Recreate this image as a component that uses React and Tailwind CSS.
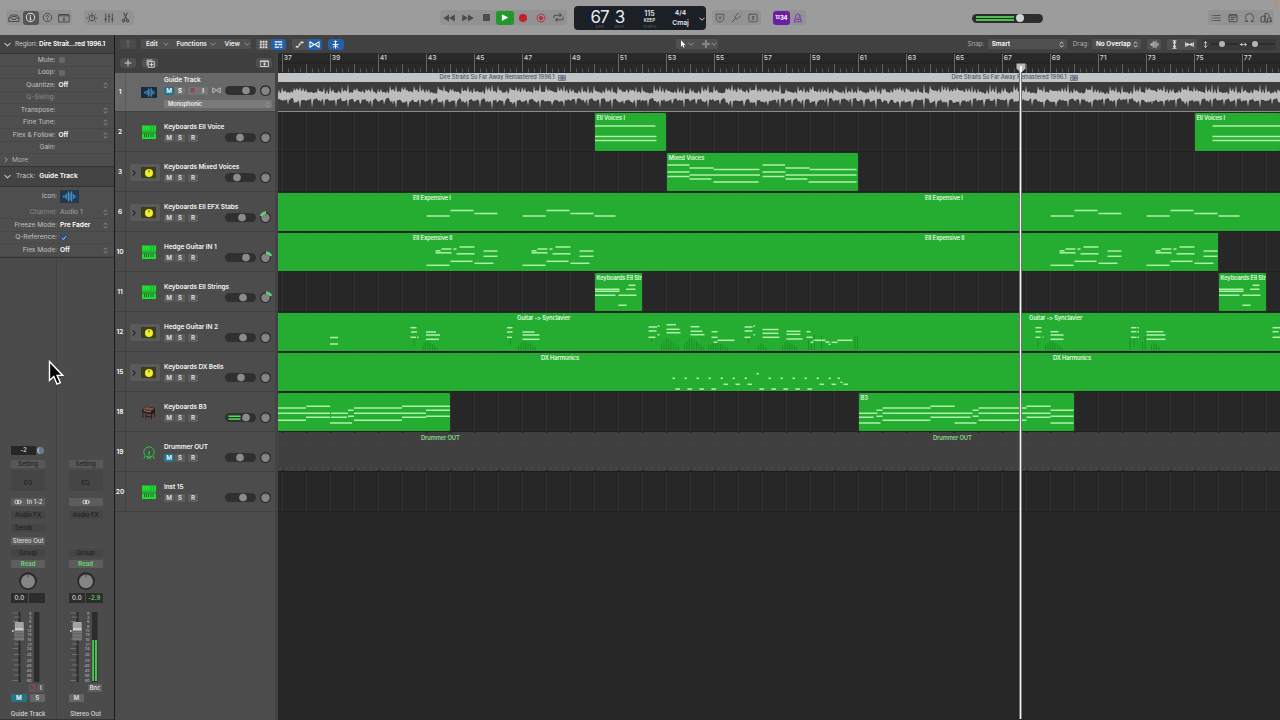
import React from 'react';
import clsx from 'clsx';

const LEFT = 278;
const RIGHT = 1280;
const BAR = 24;
const FIRST_BAR_X = 282.5;

// notes are [x1, y, x2], y is measured from the top of the lane
const shift = (notes, dx) => notes.map(([a, y, b]) => [a + dx, y, b + dx]);

const voices = [[594, 14, 655], [594, 24.5, 656], [594, 28.5, 656]];
const voicesLate = [[1212, 14, 1280], [1212, 24.5, 1280], [1212, 28.5, 1280]];

const mixed = [
  [667, 13, 689], [689, 16, 713], [713, 17.5, 759], [667, 20, 689], [689, 23, 759.5], [667, 24.5, 689], [689, 27, 711], [713, 30, 758],
  [762, 13, 784.5], [785, 16, 809], [809, 17.5, 856], [762, 20, 785], [785, 23, 856], [762, 24.5, 784], [785, 27, 807], [808, 30, 856],
];

const stabs = [
  [426, 24, 449], [450, 18.5, 473], [474, 21.5, 497], [522, 24, 545], [546, 18.5, 569], [570, 21.5, 593], [594, 24, 615],
];

const expensivePhrase = [
  [441, 17, 451], [453, 17, 456], [459, 15, 474], [435, 18.8, 440], [435, 20.8, 451], [456, 21.8, 474], [483, 19, 497],
  [483, 24.3, 497], [450, 29.3, 472], [474, 31.3, 493], [426, 33.3, 449],
];
const expensive = [...expensivePhrase, ...shift(expensivePhrase, 96)];

const strings = [
  [628, 13.3, 635], [594, 17.3, 619], [625.5, 17.3, 635], [594, 19.2, 619], [594, 23.3, 615], [618, 23.3, 636], [618, 33.3, 626],
];

const guitar = [
  [330, 25.5, 338], [330, 32, 338],
  [410.5, 15.7, 416.5], [411, 20, 417], [410.5, 25.3, 416], [417, 25.3, 418.5], [426, 20, 436], [426, 23, 440], [426, 27.3, 439],
  [507, 15.7, 512.5], [507, 20, 512.5], [507, 25.3, 512], [522, 20, 534], [522, 23, 539], [522, 27.3, 539],
  [648, 15, 656.5], [657, 14, 659], [648, 19, 656], [657, 22.7, 659], [648, 25.3, 655],
  [666, 12.7, 675.5], [666, 17.3, 679], [666, 20.7, 680], [690, 14.7, 699], [690, 19.3, 702], [690, 22.7, 704],
  [711, 19.7, 717], [711, 25.3, 717], [713, 30.3, 717], [717, 28.3, 734],
  [744, 15, 752], [753, 14, 754.5], [744, 19, 752], [753, 22.7, 754.5], [744, 25.3, 750],
  [762, 17.5, 778], [762, 21.3, 778], [762, 25.3, 779], [786, 19.3, 800], [786, 22.3, 800], [786, 27, 802],
  [806, 19.7, 810], [806, 25.3, 812], [810, 30.3, 813], [813, 28.3, 825], [825, 30, 829], [828, 32.3, 830], [831, 30.3, 837], [837, 28.3, 852],
];
const guitarLoop = [
  [1035, 15.7, 1041], [1035, 19.7, 1041], [1035, 25.3, 1040], [1042, 25.3, 1043], [1050, 19.7, 1058], [1050, 23, 1063], [1050, 27.3, 1063],
  [1130.5, 15.7, 1136], [1137, 15.7, 1138.5], [1130.5, 19.7, 1136], [1137, 19.7, 1138.5], [1130.5, 25.3, 1136], [1137, 25.3, 1138.5], [1146, 19.7, 1163], [1146, 23, 1165], [1146, 27.3, 1165],
  [1272, 15.7, 1280], [1272, 19.7, 1278], [1272, 25.3, 1280],
];

// controller data drawn as dark bars: [x, top, bottom]
const hump = (from, to, height) => {
  const bars = [];
  for (let x = from; x <= to; x += 2.4) {
    const t = (x - from) / (to - from);
    bars.push([x, 38 - height * (t < 0.3 ? 0.5 + t * 1.6 : 1.3 - t * 1.1), 38.5]);
  }
  return bars;
};
const guitarBars = [
  [414, 27, 34], [510.5, 27, 33], ...hump(423, 438, 10), ...hump(518, 537, 10),
  [651, 27, 30], [748, 27, 31], ...hump(661, 679, 13), ...hump(684, 704, 13), ...hump(708, 729, 9), ...hump(758, 767, 7), ...hump(782, 798, 10),
  [808, 28, 38], [811, 32, 38], [814, 23, 38], [821, 24, 38], [854.5, 24, 38], [857, 24, 38],
  [1037.5, 27, 35], ...hump(1045, 1062, 10), [1129.5, 26, 38], [1133.5, 27, 35], [1142, 30, 38], [1144.5, 24, 38], ...hump(1151, 1160, 9),
];

const bells = [
  ...[672, 684, 696, 708, 720, 732, 744, 768, 780, 792, 804, 816, 828, 837].map((x) => [x, 26.3, x + 2.5]),
  [756, 21.7, 758.5],
  ...[675, 687, 699, 711, 759, 771, 783, 795, 807].map((x) => [x, 37, x + 4.5]),
  ...[723, 735, 747, 819, 831, 843].map((x) => [x, 32.3, x + 4.5]),
  [840, 30.3, 842],
];

const organA = [
  [306.5, 14.3, 330], [402, 14.3, 450], [278, 16, 306], [354, 16, 402], [348, 18.3, 353.5], [426, 18.3, 450], [278, 21.3, 330],
  [331, 21.3, 348], [354, 21.3, 426], [348, 24.3, 354], [426, 24.3, 450], [306, 25.3, 330], [331, 25.3, 347], [402, 25.3, 426],
  [278, 28.3, 306], [354, 28.3, 402], [330, 31, 352],
];
const organB = [
  [930, 14.3, 954], [1026, 14.3, 1050], [882, 16, 930], [978, 16, 1026], [876, 18.3, 882], [972, 18.3, 978], [1050, 18.3, 1073],
  [858, 21.3, 877], [882, 21.3, 972], [978, 21.3, 1050], [876, 24.3, 882], [972, 24.3, 978], [1050, 24.3, 1073], [858, 25.3, 873],
  [930, 25.3, 970], [1026, 25.3, 1050], [882, 28.3, 930], [978, 28.3, 1026], [858, 31, 880], [954, 31, 976], [1050, 31, 1073],
];

const tracks = [
  { num: 2, name: 'Keyboards EII Voice', icon: 'synth', vol: 15, regions: [
    { from: 594.5, to: 666, title: 'EII Voices I', notes: voices },
    { from: 1194.5, to: 1280, title: 'EII Voices I', notes: voicesLate },
  ] },
  { num: 3, name: 'Keyboards Mixed Voices', icon: 'stack', vol: 12, regions: [
    { from: 666.5, to: 858, title: 'Mixed Voices', notes: mixed },
  ] },
  { num: 6, name: 'Keyboards EII EFX Stabs', icon: 'stack', vol: 17, pan: 'left', loop: true, regions: [
    { from: 278, to: 410.5, notes: [] },
    { from: 410.5, to: 922.5, title: 'EII Expensive I', notes: stabs },
    { from: 922.5, to: 1280, title: 'EII Expensive I', notes: shift(stabs, 624) },
  ] },
  { num: 10, name: 'Hedge Guitar IN 1', icon: 'synth', vol: 21, pan: 'right', loop: true, regions: [
    { from: 278, to: 410.5, notes: [] },
    { from: 410.5, to: 922.5, title: 'EII Expensive II', notes: expensive },
    { from: 922.5, to: 1218, title: 'EII Expensive II', notes: shift(expensive, 624) },
  ] },
  { num: 11, name: 'Keyboards EII Strings', icon: 'synth', vol: 18, pan: 'right', regions: [
    { from: 594.5, to: 642, title: 'Keyboards EII Str', notes: strings },
    { from: 1218.5, to: 1266, title: 'Keyboards EII Str', notes: shift(strings, 624) },
  ] },
  { num: 12, name: 'Hedge Guitar IN 2', icon: 'stack', vol: 18, loop: true, regions: [
    { from: 278, to: 514.5, notes: guitar, bars: guitarBars },
    { from: 514.5, to: 1026.5, title: 'Guitar -> Synclavier', notes: guitar, bars: guitarBars },
    { from: 1026.5, to: 1280, title: 'Guitar -> Synclavier', notes: guitarLoop, bars: guitarBars },
  ] },
  { num: 15, name: 'Keyboards DX Bells', icon: 'stack', vol: 16, loop: true, regions: [
    { from: 278, to: 538.5, notes: [] },
    { from: 538.5, to: 1050.5, title: 'DX Harmonics', notes: bells },
    { from: 1050.5, to: 1280, title: 'DX Harmonics', notes: [] },
  ] },
  { num: 18, name: 'Keyboards B3', icon: 'organ', vol: 21, level: true, regions: [
    { from: 278, to: 450, notes: organA },
    { from: 858.5, to: 1074, title: 'B3', notes: organB },
  ] },
  { num: 19, name: 'Drummer OUT', icon: 'drums', vol: 15, muted: true, drummer: true, regions: [
    { from: 278, to: 418.5 },
    { from: 418.5, to: 930.5, title: 'Drummer OUT' },
    { from: 930.5, to: 1280, title: 'Drummer OUT' },
  ] },
  { num: 20, name: 'Inst 15', icon: 'synth', vol: 18, regions: [] },
];

const barLines = Array.from({ length: 42 }, (_, i) => FIRST_BAR_X - LEFT + i * BAR);

const wavePath = (() => {
  let seed = 11;
  const rand = () => {
    seed = (seed * 16807) % 2147483647;
    return seed / 2147483647;
  };
  const top = [];
  const bottom = [];
  let level = 3;
  for (let x = 0; x <= 1002; x += 1) {
    if (x % 12 === 4) level = 3.5 + rand() * 2.5;
    level = Math.max(1.8, level - 0.22);
    let up = level + rand() * 2;
    let down = level + rand() * 2;
    if (x % 6 === 1) up += rand() * 4;
    if (x % 8 === 3) down += rand() * 3;
    if (x % 12 === 4) up = 7 + rand() * 5;
    if (x % 24 === 22) {
      up = 9 + rand() * 4;
      down = 11 + rand() * 2.5;
    }
    if (x % 24 === 10) down = 8 + rand() * 5;
    top.push(`${x},${(14 - up).toFixed(1)}`);
    bottom.unshift(`${x},${(14 + down).toFixed(1)}`);
  }
  return `M${top.join('L')}L${bottom.join('L')}Z`;
})();

function Svg({ size = 12, className, children, ...rest }) {
  return (
    <svg width={size} height={size} viewBox="0 0 12 12" fill="none" stroke="currentColor" strokeWidth="1" strokeLinecap="round" strokeLinejoin="round" className={clsx('shrink-0', className)} {...rest}>
      {children}
    </svg>
  );
}

const Chevron = ({ className, size = 6 }) => <Svg size={size} strokeWidth="1.8" className={className}><path d="M1.5 4L6 8.5 10.5 4" /></Svg>;
const Stepper = ({ className }) => <Svg size={7} strokeWidth="1.3" className={className}><path d="M3.5 4.2L6 1.7l2.5 2.5M3.5 7.8L6 10.3l2.5-2.5" /></Svg>;
const WaveIcon = ({ size = 12 }) => <Svg size={size} strokeWidth="0.9"><path d="M.5 5.6v.8M2 4.8v2.4M3.5 3.8v4.4M5 1.8v8.4M6.5 2.8v6.4M8 1.6v8.8M9.5 4v4M11 5v2" /></Svg>;
const FlexIcon = ({ size = 10 }) => <Svg size={size} strokeWidth="1.1"><path d="M1 3v6l4.5-3zM11 3v6L6.5 6z" /></Svg>;
const Rings = () => <Svg size={8} strokeWidth="1.3"><circle cx="4" cy="6" r="2.8" /><circle cx="8" cy="6" r="2.8" /></Svg>;
const LoopMark = () => <Svg size={8} strokeWidth="1.1"><rect x="1" y="2.5" width="10" height="7" /><circle cx="4.5" cy="6" r="2" /><circle cx="7.5" cy="6" r="2" /></Svg>;
const AddFolder = () => <Svg size={9} strokeWidth="1.2"><path d="M.8 2.5h10.4v7.5H.8zM.8 3.5h10.4M6 5v3.5M4.3 6.7h3.4" /></Svg>;

function Tool({ w = 'w-[16.5px]', on, children }) {
  return <div className={clsx('flex h-[14px] items-center justify-center rounded-[3px]', w, on)}>{children}</div>;
}

function Toolbar() {
  return (
    <header className="relative flex h-[35px] shrink-0 items-center bg-[#9c9c9c] text-[#4c4c4c]">
      <div className="ml-[6px] flex h-[15px] items-center rounded-[4px] bg-[#939393]">
        <Tool><Svg size={12}><path d="M1 6l2-3h6l2 3v3.5H1zM1 6h3l.5 1.5h3L8 6h3M4 4.5h4" /></Svg></Tool>
        <Tool on="bg-[#555] text-[#ddd]"><Svg size={11} strokeWidth="1.1"><circle cx="6" cy="6" r="4.6" /><path d="M6 5.5v3M6 3.5v.3M5.3 5.5H6M5.2 8.5h1.6" /></Svg></Tool>
        <Tool><Svg size={11}><circle cx="6" cy="6" r="4.6" /><path d="M4.8 4.9a1.2 1.2 0 112 .9c-.5.4-.8.6-.8 1.1M6 8.5v.2" /></Svg></Tool>
        <Tool><Svg size={12}><path d="M1 2.5h10v7.5H1zM1 3.8h10M6 5.2v3.3M4.6 7.2L6 8.6l1.4-1.4" /></Svg></Tool>
      </div>
      <div className="ml-[12px] flex h-[15px] items-center rounded-[4px] bg-[#939393]">
        <Tool><Svg size={12}><circle cx="6" cy="6" r="2.9" /><path d="M6 4.2v2M6 1v.5M2.4 2.4l.4.4M9.6 2.4l-.4.4M.8 6h.5M10.7 6h.5M2.4 9.6l.4-.4M9.6 9.6l-.4-.4" /></Svg></Tool>
        <Tool><Svg size={10} strokeWidth="1.2"><path d="M2 1v10M6 1v10M10 1v10M1 7.5h2M5 4h2M9 7.5h2" /></Svg></Tool>
        <Tool><Svg size={11} strokeWidth="1.2"><path d="M4.2 1.2l3.4 7.2M7.8 1.2L4.4 8.4" /><circle cx="3.8" cy="9.6" r="1.3" /><circle cx="8.2" cy="9.6" r="1.3" /></Svg></Tool>
      </div>

      <div className="ml-[306px] flex h-[15px] items-center rounded-[4px] bg-[#929292]">
        <Tool w="w-[19px]"><Svg size={12} stroke="none"><path fill="currentColor" d="M6 2.5v7L.3 6zM11.8 2.5v7L6 6z" /></Svg></Tool>
        <Tool w="w-[18px]"><Svg size={12} stroke="none"><path fill="currentColor" d="M.2 2.5v7L6 6zM6 2.5v7L11.8 6z" /></Svg></Tool>
        <Tool w="w-[19px]"><div className="h-[7px] w-[7px] bg-[#4c4c4c]" /></Tool>
        <Tool w="w-[18px]" on="bg-[#22972c] text-white"><Svg size={9} stroke="none"><path fill="currentColor" d="M2.5 1.5v9L11 6z" /></Svg></Tool>
        <Tool w="w-[19px]"><div className="h-[8px] w-[8px] rounded-full bg-[#c3202c]" /></Tool>
        <Tool w="w-[17px]"><Svg size={10} className="text-[#bd2a33]" strokeWidth="1.1"><circle cx="6" cy="6" r="4.7" strokeDasharray="1.8 .7" /><circle cx="6" cy="6" r="2" fill="currentColor" /></Svg></Tool>
        <Tool w="w-[17.5px]"><Svg size={11} strokeWidth="1.1"><path d="M1 6.3V5a1.5 1.5 0 011.5-1.5H9M7.3 1.8L9 3.5 7.3 5.2M11 5.7V7a1.5 1.5 0 01-1.5 1.5H3M4.7 6.8L3 8.5l1.7 1.7" /></Svg></Tool>
      </div>

      <div className="ml-[6.5px] flex h-[24px] w-[132px] rounded-[4px] bg-[#1b1f26] text-[#e4e9ee]">
        <div className="ml-[16px] w-[20px] text-center">
          <div className="h-[18px] text-[17px] leading-[22px] tracking-[-1px]">67</div>
          <div className="mt-[0.5px] text-[4px] leading-[5px] text-[#585d63]">BAR</div>
        </div>
        <div className="ml-[2px] w-[16px] text-center">
          <div className="h-[18px] text-[17px] leading-[22px] tracking-[-1px]">3</div>
          <div className="mt-[0.5px] text-[4px] leading-[5px] text-[#585d63]">BEAT</div>
        </div>
        <div className="ml-[11px] w-[22px] pt-[4px] text-center font-semibold">
          <div className="text-[7px] leading-[7px]">115</div>
          <div className="mt-[1px] text-[4.5px] leading-[6px]">KEEP</div>
          <div className="text-[4px] font-normal leading-[6px] text-[#585d63]">TEMPO</div>
        </div>
        <div className="ml-[8px] w-[24px] pt-[4px] text-center text-[6.7px] font-semibold leading-[7px]">
          <div>4/4</div>
          <div className="mt-[3px]">Cmaj</div>
        </div>
        <Chevron className="ml-[6px] mt-[10px]" />
      </div>

      <div className="ml-[6px] flex h-[15px] items-center rounded-[4px] bg-[#939393]">
        <Tool><Svg size={10}><path d="M2 1.5h8.5v6L8 10.5H4L1.5 7.5v-6zM4.5 4.2l3 3M7.5 4.2l-3 3" /></Svg></Tool>
        <Tool><Svg size={11}><path d="M1.2 10.8l3.6-3.6M4.8 7.2c-1-1.5 0-3 1.5-4.2L8 1.2M4.8 7.2c1.5 1 3 0 4.2-1.5L10.8 4" /></Svg></Tool>
        <Tool><Svg size={10}><rect x="1" y="1.5" width="10" height="9" rx="1" /><path d="M7.3 4.2H5.2v1.7h1.6v1.8H4.7" /></Svg></Tool>
      </div>
      <div className="ml-[12px] flex h-[15px] items-center rounded-[4px] bg-[#939393]">
        <Tool on="bg-[#6b1ea5] text-[6px] font-bold tracking-[-0.3px] text-white"><span className="text-[5px]">12</span>34</Tool>
        <Tool><Svg size={10} className="text-[#7c3fae]" strokeWidth="1.2"><path d="M4.7 1.5h2.6l3 9H1.7zM3 7.7h6M5.5 7.5L9.5 3" /></Svg></Tool>
      </div>

      <div className="ml-[166px] mt-[1px] flex h-[9px] w-[71px] items-center rounded-full bg-[#2d2d2d] pl-[4px]">
        <div className="flex w-[38px] flex-col gap-[1px]">
          <div className="h-[2px] bg-[#51bd55]" />
          <div className="h-[2px] bg-[#51bd55]" />
        </div>
        <div className="ml-[2px] h-[8px] w-[8px] rounded-full bg-[#d0d3d3]" />
      </div>

      <div className="ml-auto mr-[6px] flex h-[15px] items-center rounded-[4px] bg-[#939393]">
        <Tool><Svg size={10}><path d="M1 3h.4M1 6h.4M1 9h.4M3.5 3H11M3.5 6H11M3.5 9H11" /></Svg></Tool>
        <Tool><Svg size={10} strokeWidth="1.2"><rect x="1.2" y="2" width="9.6" height="8.5" rx="1" /><path d="M1.5 3.4h9M3.5 5.8h5M3.5 8h3" /></Svg></Tool>
        <Tool><Svg size={11}><path d="M1.2 10.3h3.2C2.5 9.3 1.7 7.7 1.7 6a4.3 4.3 0 018.6 0c0 1.7-.8 3.3-2.7 4.3h3.2" /></Svg></Tool>
        <Tool><Svg size={12}><path d="M1 9.5V5h1l.7-1H5v5.5zM5 9V1.5h2.5L9 3v2M7.5 10V6.5l3.500-.8v3.500" /><circle cx="6.8" cy="10" r=".8" /><circle cx="10.3" cy="9.3" r=".8" /></Svg></Tool>
      </div>
      <div className="absolute right-[2px] top-[3px] h-[3px] w-[3px] rounded-full bg-[#cf8c3c]" />
    </header>
  );
}

function InfoRow({ label, value, stepper, dim, check, wide }) {
  return (
    <div className={clsx('flex h-[12.5px] items-center border-b border-[#484848] pt-[1px] text-[6.6px]', dim ? 'text-[#8b8b8b]' : 'text-[#c2c2c2]')}>
      <span className={clsx('whitespace-nowrap text-right', wide ? 'w-[57px]' : 'w-[55.5px]')}>{label}:</span>
      {value ? <span className={clsx('ml-[3px]', dim ? 'text-[#a5a5a5]' : 'font-semibold text-white')}>{value}</span> : null}
      {check === false ? <span className="ml-[3px] h-[6px] w-[6px] rounded-[1px] bg-[#666]" /> : null}
      {check ? <span className="ml-[3px] flex h-[7px] w-[7px] items-center justify-center rounded-[1px] bg-[#2c4e79] text-[#b8d2ef]"><Svg size={6} strokeWidth="1.8"><path d="M2.5 6.5L5 9l4.5-6" /></Svg></span> : null}
      {stepper ? <Stepper className="ml-auto mr-[5px] text-[#a5a5a5]" /> : null}
    </div>
  );
}

function Slot({ className, children }) {
  return <div className={clsx('flex h-[8px] w-[34px] shrink-0 items-center justify-center whitespace-nowrap rounded-[1px] text-[6px] font-medium', className)}>{children}</div>;
}

function Knob({ size = 11 }) {
  return (
    <svg width={size} height={size} viewBox="0 0 12 12" className="block shrink-0">
      <circle cx="6" cy="6" r="6" fill="#2c2c2c" />
      <circle cx="6" cy="6.3" r="4.6" fill="#858585" />
      <path d="M6 1.6v2" stroke="#444" strokeWidth="0.6" />
    </svg>
  );
}

const scale = ['0', '3', '6', '9', '12', '15', '18', '21', '24', '30', '35', '40', '45', '50', '60'];
const scaleY = [2, 6, 10.5, 15, 19.5, 23.5, 28, 33, 37.5, 43.5, 49, 54, 59, 64, 69.5];

function Fader({ live }) {
  return (
    <svg width="56" height="76" viewBox="0 0 56 76" className="shrink-0" fontFamily="Inter, sans-serif">
      <rect x="18.5" y="1" width="2" height="70" fill="#2b2b2b" />
      {scaleY.map((y, i) => <path key={y} d={`M${i % 2 ? 14 : 12.5} ${y}h5.5`} stroke="#8b8b8b" strokeWidth="0.6" />)}
      {scale.map((s, i) => <text key={s} x="31.5" y={scaleY[i] + 1.5} textAnchor="end" fontSize="3.8" fontWeight="500" fill="#b0b0b0">{s}</text>)}
      <rect x="34" y="1" width="5.5" height="70" fill="#2c2c2c" />
      {live ? <path d="M35.2 29v41M38 29v41" stroke="#4fc956" strokeWidth="1.9" /> : null}
      <rect x="14.5" y="11" width="9.5" height="18.5" rx="1" fill="#777" />
      <rect x="15" y="11" width="8.5" height="6" fill="#a3a3a3" />
      <rect x="15" y="17" width="8.5" height="3" fill="#c9c9c9" />
      <path d="M15 20h8.5M15 23h8.5M15 26h8.5" stroke="#4d4d4d" strokeWidth="0.7" />
      <path d="M12 19l2.5 1-2.5 1z" fill="#ddd" />
    </svg>
  );
}

function Strip({ name, live }) {
  const faint = 'bg-[#454545] text-[#1f1f1f]';
  return (
    <div className={clsx('flex flex-col items-center text-[#ddd]', live ? 'w-[57px]' : 'w-[57.5px] border-r border-[#424242]')}>
      <div className={clsx('mt-[188px] flex h-[9px] w-[34px] items-center', live && 'invisible')}>
        <span className="w-[25px] bg-[#262626] text-center text-[6.3px] font-medium leading-[9px]">-2</span>
        <span className="ml-[1px] h-[7px] w-[7px] rounded-full border-l-2 border-[#7fb3e6] bg-[#6f7982]" />
      </div>
      <Slot className="mt-[5px] bg-[#585858] text-[#1f1f1f]">Setting</Slot>
      <Slot className={clsx('mt-[2px] !h-[21px] pt-[5px]', faint)}>EQ</Slot>
      <Slot className="mt-[7px] gap-[5px] bg-[#5d5d5d]"><Rings />{live ? null : <span>In 1-2</span>}</Slot>
      <Slot className={clsx('mt-[4.5px]', faint)}>Audio FX</Slot>
      <Slot className={clsx('mt-[5.5px] pr-[9px]', faint, live && 'invisible')}>Sends</Slot>
      <Slot className={clsx('mt-[5px] bg-[#5d5d5d]', live && 'invisible')}>Stereo Out</Slot>
      <Slot className={clsx('mt-[3.5px]', faint)}>Group</Slot>
      <Slot className="mt-[3.5px] bg-[#5d5d5d] font-semibold text-[#66dd77]">Read</Slot>
      <div className="mt-[4px]"><Knob size={18} /></div>
      <div className="mt-[3px] flex h-[10px] w-[34px] shrink-0 gap-[1px] text-center text-[6.2px] font-medium leading-[10px]">
        <span className="w-[17px] bg-[#2d2d2d]">0.0</span>
        <span className="w-[17px] bg-[#2d2d2d] text-[#5fd467]">{live ? '-2.9' : ''}</span>
      </div>
      <div className="mt-[8px] h-[73px] overflow-hidden"><Fader live={live} /></div>
      <div className="mr-[12px] flex h-[8px] shrink-0 gap-[1px] self-end text-[6px] font-semibold leading-[8px]">
        {live ? <span className="rounded-[1px] bg-[#5e5e5e] px-[1.5px]">Bnc</span> : (
          <>
            <span className="w-[7px] bg-[#5a5a5a] text-center text-[#a42a32]">R</span>
            <span className="w-[7px] bg-[#5a5a5a] text-center">I</span>
          </>
        )}
      </div>
      <div className="mt-[2px] flex h-[8px] w-[34px] shrink-0 gap-[3px] text-center text-[6.2px] font-semibold leading-[8px]">
        <span className={clsx('w-[15.5px] rounded-[1px]', live ? 'bg-[#666]' : 'bg-[#237487] text-white')}>M</span>
        {live ? null : <span className="w-[15.5px] rounded-[1px] bg-[#666]">S</span>}
      </div>
      <div className="mt-[7px] whitespace-nowrap text-[6px] font-medium leading-[9px]">{name}</div>
    </div>
  );
}

function Inspector() {
  return (
    <aside className="flex w-[115px] shrink-0 flex-col border-r border-[#191919] bg-[#4b4b4b]">
      <div className="flex h-[19px] items-center border-b border-[#333] bg-[#434343] text-[6.5px] text-[#c5c5c5]">
        <Chevron size={7} className="ml-[4px]" />
        <span className="ml-[4px] whitespace-nowrap tracking-[-0.1px]">Region: <b className="font-semibold text-white">Dire Strait...red 1996.1</b></span>
      </div>
      <div className="h-[112px] shrink-0 bg-[#4e4e4e]">
        <InfoRow label="Mute" check={false} />
        <InfoRow label="Loop" check={false} />
        <InfoRow label="Quantize" value="Off" stepper />
        <InfoRow label="Q-Swing" dim />
        <InfoRow label="Transpose" stepper />
        <InfoRow label="Fine Tune" stepper />
        <InfoRow label="Flex & Follow" value="Off" stepper />
        <InfoRow label="Gain" />
        <div className="flex h-[12px] items-center text-[6.6px] text-[#b0b0b0]"><Chevron className="ml-[3px] -rotate-90" /><span className="ml-[3px]">More</span></div>
      </div>
      <div className="flex h-[21px] shrink-0 items-center border-y border-[#333] bg-[#434343] text-[6.6px] text-[#c5c5c5]">
        <Chevron size={7} className="ml-[4px]" />
        <span className="ml-[5px]">Track:</span>
        <b className="ml-[4px] font-semibold text-white">Guide Track</b>
      </div>
      <div className="h-[71px] shrink-0 border-b border-[#333] bg-[#4e4e4e]">
        <div className="flex h-[19.5px] items-center text-[6.6px] text-[#c2c2c2]">
          <span className="w-[57px] text-right">Icon:</span>
          <span className="ml-[3px] flex h-[13px] w-[19px] items-center justify-center bg-[#243a50] text-[#4aa0e0]"><WaveIcon size={13} /></span>
        </div>
        <InfoRow wide label="Channel" value="Audio 1" stepper dim />
        <InfoRow wide label="Freeze Mode" value="Pre Fader" stepper />
        <InfoRow wide label="Q-Reference" check />
        <InfoRow wide label="Flex Mode" value="Off" stepper />
      </div>
      <div className="flex min-h-0 flex-1 border-b border-[#333]">
        <Strip name="Guide Track" />
        <Strip name="Stereo Out" live />
      </div>
    </aside>
  );
}

function Select({ w, children }) {
  return (
    <div className={clsx('ml-[3px] flex h-[10px] items-center justify-between rounded-[2px] bg-[#505050] pl-[4px] pr-[2px] font-semibold text-white', w)}>
      <span className="whitespace-nowrap">{children}</span><Stepper />
    </div>
  );
}

function ZoomSlider({ vertical }) {
  return (
    <div className={clsx('flex items-center', vertical ? 'w-[38px]' : 'w-[36px]')}>
      <Svg size={7} strokeWidth="1.3" className={clsx(vertical && 'rotate-90')}><path d="M1 6h10M3.5 3.5L1 6l2.5 2.5M8.5 3.5L11 6 8.5 8.5" /></Svg>
      <span className={clsx('h-[2px] bg-[#2c2c2c]', vertical ? 'ml-[2px] w-[8px]' : 'w-[5px]')} />
      <span className="h-[6px] w-[6px] rounded-full bg-[#b5b5b5]" />
      <span className="mr-[2px] h-[2px] flex-1 bg-[#2c2c2c]" />
    </div>
  );
}

function MenuBar() {
  const blue = 'bg-[#2461ac] text-white';
  return (
    <div className="flex h-[18px] shrink-0 items-center bg-[#414141] text-[6.4px] text-[#ddd]">
      <Tool w="ml-[5px] w-[16px] !h-[10px] bg-[#4b4b4b] text-[#777]"><Svg size={8}><path d="M3 4l3-3 3 3M6 1v10" /></Svg></Tool>
      <div className="ml-[5px] flex h-[10px] w-[110px] items-center rounded-[2px] bg-[#505050] pl-[5px] font-semibold text-[#eee]">
        <span className="w-[17px]">Edit</span><Chevron className="text-[#999]" />
        <span className="ml-[7.5px] w-[33.5px]">Functions</span><Chevron className="text-[#999]" />
        <span className="ml-[8.5px] w-[19.5px]">View</span><Chevron className="text-[#999]" />
      </div>
      <div className="ml-[5px] flex rounded-[2px] bg-[#505050]">
        <Tool w="w-[15px] !h-[11px]"><Svg size={9} stroke="none"><path fill="currentColor" d="M1 1h2.7v2.7H1zM4.7 1h2.7v2.7H4.7zM8.4 1h2.7v2.7H8.4zM1 4.7h2.7v2.7H1zM4.7 4.7h2.7v2.7H4.7zM8.4 4.7h2.7v2.7H8.4zM1 8.4h2.7v2.7H1zM4.7 8.4h2.7v2.7H4.7zM8.4 8.4h2.7v2.7H8.4z" /></Svg></Tool>
        <Tool w="w-[15px] !h-[11px]" on={blue}><Svg size={9} strokeWidth="1.8" strokeLinecap="butt"><path d="M1 2.5h10M1 6h3.5M6 6h5M1 9.5h6M8.5 9.5H11" /></Svg></Tool>
      </div>
      <div className="ml-[6px] flex rounded-[2px] bg-[#505050]">
        <Tool w="w-[15px] !h-[11px]"><Svg size={9} strokeWidth="1.2"><path d="M2 9h2.5L7.5 3.500H11" /><path d="M1 9h3.500M4.800 6h2.400M7.500 3.200h3.500" strokeWidth="2.300" strokeLinecap="butt" /></Svg></Tool>
        <Tool w="w-[15px] !h-[11px]" on={blue}><FlexIcon size={11} /></Tool>
      </div>
      <Tool w="ml-[5.5px] w-[16px] !h-[11px]" on={blue}><Svg size={9} strokeWidth="1.3"><path d="M6 1.2v9.6M2.5 6h7M4.3 1.8L6 3.5l1.7-1.7M3 9.5l2-1.5M9 9.5L7 8" /></Svg></Tool>
      <div className="ml-[332px] flex h-[10px] w-[42px] items-center rounded-[2px] bg-[#505050] pl-[3px]">
        <Svg size={8} stroke="none"><path fill="#fff" d="M3 .5v9.5l2.2-2L6.8 11.5l1.5-.7L6.8 7.4h2.9z" /></Svg>
        <Chevron className="ml-[1px] text-[#999]" />
        <Svg size={8} strokeWidth="1.3" className="ml-[8px]"><path d="M6 1v3.5M6 7.5V11M1 6h3.5M7.5 6H11" /></Svg>
        <Chevron className="ml-[1px] text-[#999]" />
      </div>
      <span className="ml-auto text-[#aaa]">Snap:</span>
      <Select w="w-[79px]">Smart</Select>
      <span className="ml-[6px] text-[#aaa]">Drag:</span>
      <Select w="w-[49px]">No Overlap</Select>
      <Tool w="ml-[6px] w-[14px] !h-[11px] bg-[#505050]"><WaveIcon size={9} /></Tool>
      <div className="ml-[6px] mr-[5px] flex rounded-[2px] bg-[#505050]">
        <Tool w="w-[15px] !h-[11px]"><Svg size={9} strokeWidth="1.5"><path d="M4 1h4M4 11h4M6 2v8M4.5 4L6 2l1.5 2M4.5 8L6 10l1.5-2" /></Svg></Tool>
        <Tool w="w-[15px] !h-[11px]"><Svg size={9} strokeWidth="1.5"><path d="M1 3.5v5M11 3.5v5M2 6h8M4 4.5L2 6l2 1.5M8 4.5L10 6 8 7.5" /></Svg></Tool>
      </div>
      <div className="mr-[4px] flex h-[11px] items-center rounded-[2px] bg-[#393939]">
        <ZoomSlider vertical />
        <ZoomSlider />
      </div>
    </div>
  );
}

function TrackIcon({ type }) {
  if (type === 'synth') {
    return (
      <svg width="14" height="15" viewBox="0 0 14 15">
        <path fill="#1fdc31" d="M0 .5h14v7H0zM0 8.5h14V14H0z" />
        <path d="M9 1v5M11.5 1v5M0 6h14" stroke="#178a22" strokeWidth="0.6" />
        <path d="M2.5 9v3M4.5 9v3M6.5 9v3M9 9v3M11 9v3" stroke="#155f1c" strokeWidth="0.9" />
      </svg>
    );
  }
  if (type === 'organ') {
    return (
      <svg width="15" height="14" viewBox="0 0 15 14">
        <path fill="#2b1711" d="M1 3.5L5 .5l9 1.5v4l-3 2.5L1 6.5z" />
        <path fill="#7a5446" d="M1.5 3.3L5 1l8.5 1.3-3 2.4z" />
        <path d="M2.5 4.7l7.5 1.3" stroke="#c9b3a2" strokeWidth="0.7" />
        <path d="M2 7v5M10.5 8v5.5M13.5 6v5M5 8v4.5M5 10l5 1" stroke="#3d1d15" strokeWidth="1.1" />
      </svg>
    );
  }
  if (type === 'drums') {
    return (
      <svg width="14" height="14" viewBox="0 0 14 14" fill="none" stroke="#27c438" strokeWidth="1">
        <circle cx="7" cy="6" r="5.2" />
        <path d="M3 10l-1.200 3M11 10l1.200 3M7 6v7M5.500 10.500v2.500M8.500 10.500v2.500" />
        <circle cx="7" cy="6.200" r="1" fill="#27c438" stroke="none" />
      </svg>
    );
  }
  return (
    <div className="flex h-[11px] w-[15px] items-center justify-center bg-[#3c3d1e]">
      <svg width="8" height="8" viewBox="0 0 8 8"><circle cx="4" cy="4" r="4" fill="#f3ee2c" /><path d="M4 .8v2.7" stroke="#67641a" /></svg>
    </div>
  );
}

function Key({ className = 'bg-[#5d5d5d] text-[#e2e2e2]', children }) {
  return <span className={clsx('h-[8px] w-[10px] rounded-[1px] text-center text-[6.2px] font-semibold leading-[8px]', className)}>{children}</span>;
}

function Volume({ value, level }) {
  return (
    <div className="flex h-[9px] w-[31px] shrink-0 items-center rounded-full bg-[#303030]">
      <svg width="31" height="9" viewBox="0 0 31 9">
        {level ? <path d="M3.5 3.3h12M3.5 6h12" stroke="#4fe05d" strokeWidth="1.5" /> : null}
        <circle cx={value} cy="4.5" r="3.8" fill="#8b8b8b" />
      </svg>
    </div>
  );
}

function TrackHeader({ track }) {
  const stack = track.icon === 'stack';
  return (
    <div className="flex h-[40px] border-b border-[#414141]">
      <div className="flex w-[11px] items-center justify-center border-r border-[#424242] pt-[1px] text-[6.5px] font-semibold text-white">{track.num}</div>
      <div className={clsx('ml-[4px] mt-[12px] flex h-[17px] w-[30px] items-center rounded-[2px]', stack && 'bg-[#5a5a5a]')}>
        <div className="w-[11px]">{stack ? <Chevron className="ml-[1px] -rotate-90" /> : null}</div>
        <div className="flex w-[15px] justify-center"><TrackIcon type={track.icon} /></div>
      </div>
      <div className="ml-[4px] w-[107px] pt-[10px]">
        <div className="h-[10px] whitespace-nowrap text-[6.5px] font-semibold leading-[10px] tracking-[-0.1px] text-[#f2f2f2]">{track.name}</div>
        <div className="flex h-[11px] items-center">
          <Key className={track.muted ? 'bg-[#237487] text-white' : undefined}>M</Key>
          <span className="w-[1px]" />
          <Key>S</Key>
          <span className="w-[3px]" />
          <Key>R</Key>
          <div className="ml-auto"><Volume value={track.vol} level={track.level} /></div>
          <div className="relative ml-[4px]">
            <Knob />
            {track.pan ? (
              <svg width="18" height="18" viewBox="0 0 18 18" className={clsx('absolute -left-[3px] -top-[3px]', track.pan === 'left' && '-scale-x-100')}>
                <path d="M9 3.5a6 6 0 015 3.5" fill="none" stroke="#5ad873" strokeWidth="2.5" />
              </svg>
            ) : null}
          </div>
        </div>
      </div>
    </div>
  );
}

function HeaderColumn() {
  return (
    <div className="flex w-[163px] shrink-0 flex-col border-r-[3px] border-[#434343] bg-[#4c4c4c]">
      <div className="flex h-[20px] shrink-0 items-center bg-[#3f3f3f] text-[#ddd]">
        <Tool w="ml-[5px] w-[16px] !h-[10px] bg-[#505050]"><Svg size={8} strokeWidth="1.4"><path d="M6 1.5v9M1.5 6h9" /></Svg></Tool>
        <Tool w="ml-[6px] w-[16px] !h-[10px] bg-[#505050]"><Svg size={9} strokeWidth="1.2"><path d="M1.5 8V1.5H8M3.5 3.5H11V11H3.5zM7.3 5.3v4M5.3 7.3h4" /></Svg></Tool>
        <Tool w="ml-auto mr-[3px] w-[16px] !h-[10px] bg-[#505050]"><AddFolder /></Tool>
      </div>
      <div className="flex h-[39px] shrink-0 border-b border-[#414141] bg-[#686868]">
        <div className="flex w-[11px] items-center justify-center border-r border-[#5a5a5a] text-[6.5px] font-semibold text-white">1</div>
        <div className="ml-[15px] mt-[14px] flex h-[11px] w-[16px] items-center justify-center bg-[#1d2c3c] text-[#4aa0e0]"><WaveIcon size={11} /></div>
        <div className="ml-[7px] w-[107px] pt-[2px]">
          <div className="h-[10px] text-[6.5px] font-semibold leading-[10px] tracking-[-0.1px] text-[#f2f2f2]">Guide Track</div>
          <div className="flex h-[11px] items-center">
            <Key className="bg-[#237487] text-white">M</Key>
            <span className="w-[1px]" />
            <Key className="bg-[#747474] text-white">S</Key>
            <span className="w-[3px]" />
            <Key className="bg-[#747474] text-[#a52832]">R</Key>
            <Key className="bg-[#747474] text-white">I</Key>
            <span className="ml-[4px] text-[#ccc]"><FlexIcon size={9} /></span>
            <div className="ml-auto"><Volume value={21} /></div>
            <div className="ml-[4px]"><Knob /></div>
          </div>
          <div className="mt-[4px] flex h-[8px] w-[108px] items-center justify-between rounded-[1px] bg-[#7a7a7a] pl-[4px] pr-[1px] text-[5.8px] font-semibold tracking-[-0.1px] text-[#eee]">
            Monophonic<Stepper className="text-[#aaa]" />
          </div>
        </div>
      </div>
      {tracks.map((track) => <TrackHeader key={track.num} track={track} />)}
    </div>
  );
}

function Ruler() {
  return (
    <svg width="1002" height="20" viewBox="0 0 1002 20" className="block shrink-0 bg-[#292929]" fontFamily="Inter, sans-serif">
      <path d="M0 10h1002" stroke="#202020" />
      {Array.from({ length: 167 }, (_, i) => <path key={i} d={`M${4.5 + i * 6} 15.5v4`} stroke="#555" />)}
      {barLines.map((x, i) => (
        <React.Fragment key={x}>
          <path d={`M${x} ${i % 2 ? 11 : 1}v18`} stroke={i % 2 ? '#5e5e5e' : '#686868'} />
          {i % 2 ? null : <text x={x + 1.3} y="7.3" fontSize="6.8" fontWeight="500" fill="#d2d2d2">{37 + i}</text>}
        </React.Fragment>
      ))}
    </svg>
  );
}

function AudioLane() {
  const label = (
    <>
      <span className="whitespace-nowrap">Dire Straits So Far Away Remastered 1996.1</span>
      <span className="ml-[3px]"><LoopMark /></span>
    </>
  );
  return (
    <div className="h-[39px] shrink-0 border-b border-[#8a8a8a] bg-[#3c3c3c]">
      <div className="flex h-[9px] text-[5.6px] font-medium text-[#47536a]">
        <div className="w-[159px] bg-[#c3c6c8]" />
        <div className="flex w-[512px] items-center overflow-hidden bg-[#c3c6c8] pl-[2.5px]">{label}</div>
        <div className="flex flex-1 items-center bg-[#c3c6c8] pl-[2.5px]">{label}</div>
      </div>
      <svg width="1002" height="29" viewBox="0 0 1002 29" className="block">
        <path d={wavePath} fill="#bcbcbc" />
      </svg>
    </div>
  );
}

function Region({ region, gap, loop }) {
  const { from, to, title, notes, bars = [] } = region;
  const width = to - from;
  return (
    <div
      className={clsx('relative mt-[1px] h-[38px] shrink-0 overflow-hidden bg-[#24ad30]', !loop && 'rounded-[1px]')}
      style={{ marginLeft: gap, width }}
    >
      <svg width={width} height="38" viewBox={`${from} 1 ${width} 38`} className="absolute left-0 top-0">
        {bars.map(([x, a, b], i) => <path key={i} d={`M${x} ${a}V${b}`} stroke="#1b8f27" strokeWidth="1" />)}
        {notes.map(([a, y, b], i) => <path key={i} d={`M${a} ${y}H${b}`} stroke="#aef2a9" strokeWidth="1.5" />)}
      </svg>
      <div className={clsx('relative whitespace-nowrap text-[5.8px] font-semibold leading-[10px] tracking-[-0.15px] text-[#e2f8e0]', loop ? 'pl-[2.5px]' : 'pl-[2px]')}>{title}</div>
    </div>
  );
}

function Grid({ color }) {
  return (
    <svg width="1002" height="40" viewBox="0 0 1002 40" className="absolute left-0 top-0">
      {barLines.map((x) => <path key={x} d={`M${x} 0v40`} stroke={color} />)}
    </svg>
  );
}

function Lane({ track }) {
  if (track.drummer) {
    return (
      <div className="relative h-[40px] shrink-0 border-b border-[#1d1d1d] bg-[#404040]">
        <svg width="1002" height="39" viewBox="0 0 1002 39" className="absolute left-0 top-0">
          {barLines.map((x) => (
            <path key={x} d={`M${x - 1.5} 0h3l-1.5 1.5zM${x - 1.5} 39h3l-1.5-1.5z`} fill="#222" />
          ))}
          {barLines.map((x) => <circle key={x} cx={x} cy="11.5" r="0.7" fill="#575757" />)}
          <path d="M2 36.5h1000" stroke="#525252" strokeWidth="1.3" strokeDasharray="1.5 4.5" />
        </svg>
        <div className="relative flex text-[5.8px] font-semibold leading-[12px] tracking-[-0.15px] text-[#86d98e]">
          {track.regions.map((r) => (
            <div key={r.from} className="overflow-hidden whitespace-nowrap pl-[2.5px]" style={{ width: r.to - r.from }}>{r.title}</div>
          ))}
        </div>
      </div>
    );
  }

  let cursor = LEFT;
  return (
    <div className="relative h-[40px] shrink-0 border-b border-[#202020]">
      <Grid color="#303030" />
      <div className="relative flex">
        {track.regions.map((region) => {
          const gap = region.from - cursor;
          cursor = region.to;
          return <Region key={region.from} region={region} gap={gap} loop={track.loop} />;
        })}
      </div>
    </div>
  );
}

function Timeline() {
  return (
    <div className="relative flex flex-col overflow-hidden bg-[#272727]" style={{ width: RIGHT - LEFT }}>
      <Ruler />
      <AudioLane />
      {tracks.map((track) => <Lane key={track.num} track={track} />)}
      <div className="absolute left-[741px] top-[12px] h-[654px] w-[3px] border-x-[0.5px] border-[#777] bg-[#f4f4f4]" />
      <svg width="10" height="9" viewBox="0 0 10 9" className="absolute left-[737.5px] top-[10px]">
        <path d="M.5.5h9v5L6.5 8.5h-3L.5 5.5z" fill="#b9b9b9" />
        <path d="M5 3v6" stroke="#fff" strokeWidth="1.8" />
      </svg>
    </div>
  );
}

export default function App() {
  return (
    <div className="relative flex h-[720px] w-[1280px] flex-col overflow-hidden bg-[#272727] font-['Inter',sans-serif] leading-none [font-feature-settings:'calt'_0]">
      <Toolbar />
      <div className="flex min-h-0 flex-1">
        <Inspector />
        <main className="flex w-[1165px] flex-col">
          <MenuBar />
          <div className="flex min-h-0 flex-1">
            <HeaderColumn />
            <Timeline />
          </div>
        </main>
      </div>
      <svg width="17" height="26" viewBox="0 0 17 26" className="absolute left-[48px] top-[360px]">
        <path d="M1.5 1.5v19l4.3-4 3.2 7.5 3.3-1.4-3.2-7.2h5.6z" fill="#050505" stroke="#fff" strokeWidth="1.4" />
      </svg>
    </div>
  );
}
